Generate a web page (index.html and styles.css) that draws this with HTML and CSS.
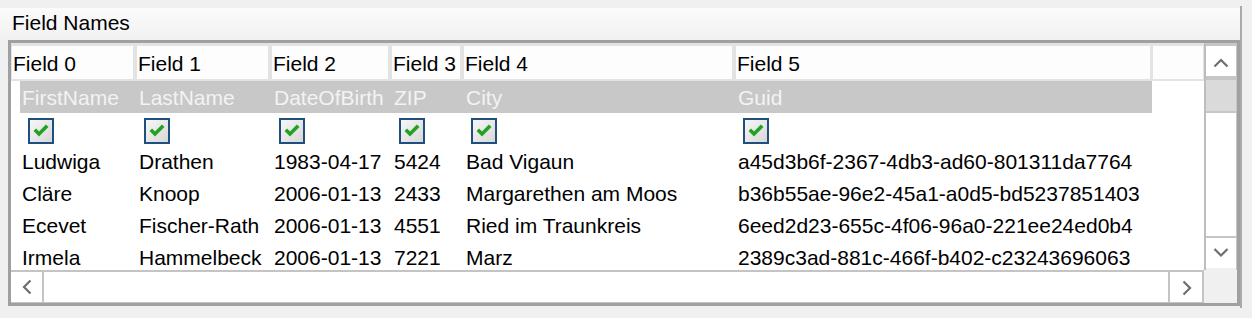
FILE: index.html
```html
<!DOCTYPE html>
<html>
<head>
<meta charset="utf-8">
<link rel="stylesheet" href="styles.css">
</head>
<body>
<div class="panel">
  <div class="title">Field Names</div>
  <div class="grid">
    <div class="main">
      <div class="hdr">
        <div class="hc h0">Field 0</div>
        <div class="hc h1">Field 1</div>
        <div class="hc h2">Field 2</div>
        <div class="hc h3">Field 3</div>
        <div class="hc h4">Field 4</div>
        <div class="hc h5">Field 5</div>
        <div class="hc hf"></div>
      </div>
      <div class="row names">
        <div class="rh"></div>
        <div class="cell c0">FirstName</div>
        <div class="cell c1">LastName</div>
        <div class="cell c2">DateOfBirth</div>
        <div class="cell c3">ZIP</div>
        <div class="cell c4">City</div>
        <div class="cell c5">Guid</div>
      </div>
      <div class="row checks">
        <div class="rh"></div>
        <div class="cell c0 first"><span class="cb"><svg width="22" height="22" viewBox="0 0 22 22"><path d="M4.8 9.8 L9 14 L17.2 5.8" fill="none" stroke="#22a122" stroke-width="3.6"/></svg></span></div>
        <div class="cell c1"><span class="cb"><svg width="22" height="22" viewBox="0 0 22 22"><path d="M4.8 9.8 L9 14 L17.2 5.8" fill="none" stroke="#22a122" stroke-width="3.6"/></svg></span></div>
        <div class="cell c2"><span class="cb"><svg width="22" height="22" viewBox="0 0 22 22"><path d="M4.8 9.8 L9 14 L17.2 5.8" fill="none" stroke="#22a122" stroke-width="3.6"/></svg></span></div>
        <div class="cell c3"><span class="cb"><svg width="22" height="22" viewBox="0 0 22 22"><path d="M4.8 9.8 L9 14 L17.2 5.8" fill="none" stroke="#22a122" stroke-width="3.6"/></svg></span></div>
        <div class="cell c4"><span class="cb"><svg width="22" height="22" viewBox="0 0 22 22"><path d="M4.8 9.8 L9 14 L17.2 5.8" fill="none" stroke="#22a122" stroke-width="3.6"/></svg></span></div>
        <div class="cell c5"><span class="cb"><svg width="22" height="22" viewBox="0 0 22 22"><path d="M4.8 9.8 L9 14 L17.2 5.8" fill="none" stroke="#22a122" stroke-width="3.6"/></svg></span></div>
      </div>
      <div class="row">
        <div class="rh"></div>
        <div class="cell c0">Ludwiga</div>
        <div class="cell c1">Drathen</div>
        <div class="cell c2">1983-04-17</div>
        <div class="cell c3">5424</div>
        <div class="cell c4">Bad Vigaun</div>
        <div class="cell c5">a45d3b6f-2367-4db3-ad60-801311da7764</div>
      </div>
      <div class="row">
        <div class="rh"></div>
        <div class="cell c0">Cläre</div>
        <div class="cell c1">Knoop</div>
        <div class="cell c2">2006-01-13</div>
        <div class="cell c3">2433</div>
        <div class="cell c4">Margarethen am Moos</div>
        <div class="cell c5">b36b55ae-96e2-45a1-a0d5-bd5237851403</div>
      </div>
      <div class="row">
        <div class="rh"></div>
        <div class="cell c0">Ecevet</div>
        <div class="cell c1">Fischer-Rath</div>
        <div class="cell c2">2006-01-13</div>
        <div class="cell c3">4551</div>
        <div class="cell c4">Ried im Traunkreis</div>
        <div class="cell c5">6eed2d23-655c-4f06-96a0-221ee24ed0b4</div>
      </div>
      <div class="row">
        <div class="rh"></div>
        <div class="cell c0">Irmela</div>
        <div class="cell c1">Hammelbeck</div>
        <div class="cell c2">2006-01-13</div>
        <div class="cell c3">7221</div>
        <div class="cell c4">Marz</div>
        <div class="cell c5">2389c3ad-881c-466f-b402-c23243696063</div>
      </div>
    </div>
    <div class="vscroll">
      <div class="sbtn"><svg width="30" height="30" viewBox="0 0 30 30"><polyline points="8.5,20.5 15,14 21.5,20.5" fill="none" stroke="#6e6e6e" stroke-width="2.2"/></svg></div>
      <div class="vthumb"></div>
      <div class="vtrack"></div>
      <div class="sbtn"><svg width="30" height="30" viewBox="0 0 30 30"><polyline points="8.5,11 15,17.5 21.5,11" fill="none" stroke="#6e6e6e" stroke-width="2.2"/></svg></div>
      <div class="vend"></div>
    </div>
    <div class="hscroll">
      <div class="hbtn hl"><svg width="31" height="30" viewBox="0 0 31 30"><polyline points="19.5,8.5 13,15 19.5,21.5" fill="none" stroke="#6e6e6e" stroke-width="2.2"/></svg></div>
      <div class="htrack"></div>
      <div class="hbtn hr"><svg width="32" height="30" viewBox="0 0 32 30"><polyline points="13.5,9.5 20,16 13.5,22.5" fill="none" stroke="#6e6e6e" stroke-width="2.2"/></svg></div>
    </div>
    <div class="corner"></div>
  </div>
</div>
</body>
</html>
```

FILE: styles.css
```css
html, body {
  margin: 0;
}
body {
  width: 1252px;
  height: 318px;
  overflow: hidden;
  box-sizing: border-box;
  padding-top: 6px;
  background: #f0f0f0;
  font-family: "Liberation Sans", Arial, sans-serif;
  font-size: 21px;
  color: #000;
}
.panel {
  width: 1240px;
  padding: 2px 0;
  border-right: 2px solid #a9a9a9;
}
.title {
  height: 32px;
  line-height: 30px;
  padding-left: 12px;
  background: linear-gradient(#fbfbfb, #f1f1f1);
  white-space: nowrap;
}
.grid {
  margin-left: 8px;
  width: 1226px;
  height: 260px;
  border: 3px solid #a0a0a0;
  display: grid;
  grid-template-columns: 1193px 33px;
  grid-template-rows: 227px 33px;
  background: #fff;
}
.main {
  overflow: hidden;
  background: #fff;
}
.hdr {
  display: flex;
  height: 38px;
  box-sizing: border-box;
  padding: 3px 0 2px 1px;
  background: #e3e3e3;
}
.hc {
  flex: none;
  box-sizing: border-box;
  height: 33px;
  background: #fdfdfd;
  border-right: 4px solid #e3e3e3;
  padding-left: 1px;
  line-height: 35px;
  white-space: nowrap;
  overflow: hidden;
}
.h0 { width: 125px; }
.h1 { width: 135px; }
.h2 { width: 120px; }
.h3 { width: 72px; }
.h4 { width: 272px; }
.h5 { width: 417px; border-right-width: 3px; }
.hf { width: 50px; border-right: 0; }

.row {
  display: flex;
  height: 32px;
  line-height: 34px;
  white-space: nowrap;
}
.rh {
  flex: none;
  width: 9px;
}
.cell {
  flex: none;
  box-sizing: border-box;
  padding-left: 2px;
  overflow: hidden;
}
.c0 { width: 117px; }
.c1 { width: 135px; }
.c2 { width: 120px; }
.c3 { width: 72px; }
.c4 { width: 272px; }
.c5 { width: 416px; }

.names .cell {
  background: #c8c8c8;
  color: #f3f3f3;
}
.checks .cell {
  padding-left: 7px;
  padding-top: 5px;
  line-height: 0;
}
.checks .first {
  padding-left: 8px;
}
.cb {
  display: inline-block;
  width: 26px;
  height: 26px;
  box-sizing: border-box;
  border: 2px solid #1f4f7f;
  background: linear-gradient(135deg, #f7f7f7, #d8d8d8);
}
.cb svg {
  display: block;
}

.vscroll {
  display: flex;
  flex-direction: column;
  box-sizing: border-box;
  border-left: 2px solid #bdbdbd;
  border-right: 1px solid #c6c6c6;
  background: #c6c6c6;
  padding-top: 3px;
}
.sbtn {
  height: 30px;
  background: #fff;
  flex: none;
}
.sbtn svg, .hbtn svg {
  display: block;
}
.vthumb {
  height: 31px;
  margin: 4px 0 2px;
  background: #dadada;
  flex: none;
}
.vtrack {
  height: 123px;
  margin-bottom: 2px;
  background: #fff;
  flex: none;
}
.vend {
  flex: 1;
  background: #f0f0f0;
}
.hscroll {
  display: flex;
  box-sizing: border-box;
  border-top: 2px solid #c4c4c4;
  padding-bottom: 1px;
  background: #c4c4c4;
}
.hbtn {
  flex: none;
  background: #fff;
}
.hl { width: 31px; }
.hr { width: 32px; margin-right: 2px; }
.htrack {
  flex: 1;
  margin: 0 2px;
  background: #fff;
}
.corner {
  background: #f0f0f0;
}
```
